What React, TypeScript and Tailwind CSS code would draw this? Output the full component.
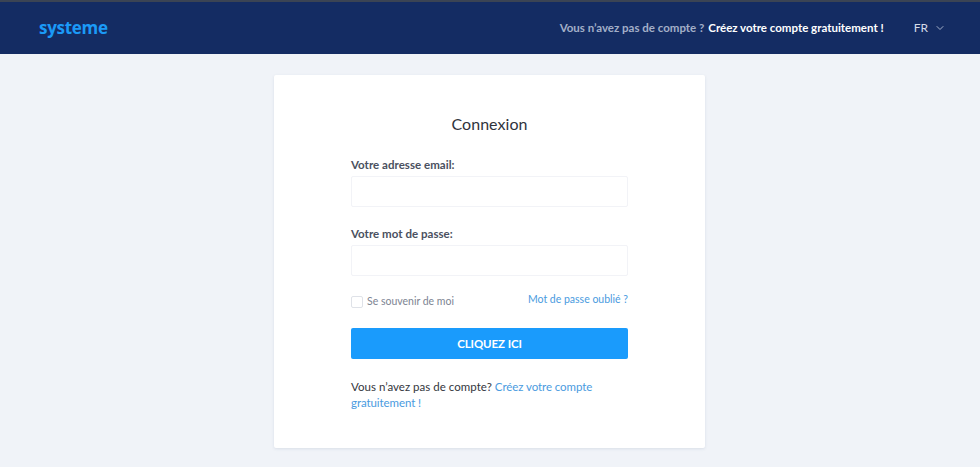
import React from "react";
import { ChevronDown } from "lucide-react";

const Header: React.FC = () => {
  return (
    <header className="h-[54px] border-t-2 border-[#3b4454] bg-[#142c63] flex items-center justify-between pl-[39px] pr-[34px]">
      <span className="text-[#1b9af7] text-[17px] font-bold leading-none font-['Open_Sans',sans-serif] tracking-[-0.3px] mt-[-2px]">
        systeme
      </span>
      <div className="flex items-center text-[11.5px] font-['Lato',sans-serif] mt-[-1px]">
        <span className="text-[#a3afc8] font-bold">Vous n’avez pas de compte ?</span>
        <span className="text-white font-bold ml-[4px]">Créez votre compte gratuitement !</span>
        <span className="text-[#d5dbe8] text-[12px] ml-[30px]">FR</span>
        <ChevronDown size={12} strokeWidth={2} className="text-[#a3afc8] ml-[6px]" />
      </div>
    </header>
  );
};

const Field: React.FC<{ label: string; type: string }> = ({ label, type }) => {
  return (
    <div>
      <label className="block text-[11.5px] leading-[16px] font-bold text-[#4a5060] tracking-[0.03px] mb-[3px]">
        {label}
      </label>
      <input
        type={type}
        className="block w-full h-[31px] bg-white border border-[#f2f3f7] rounded-[2px] outline-none"
      />
    </div>
  );
};

export default function App() {
  return (
    <div className="h-[467px] overflow-hidden bg-[#f0f3f8] font-['Lato',sans-serif]">
      <Header />
      <main className="flex justify-center pt-[21px] pr-px">
        <div className="w-[431px] h-[373px] bg-white rounded-[2px] shadow-[0_1px_3px_rgba(60,80,120,0.12)] px-[77px] pt-[38px]">
          <h1 className="text-center text-[16px] leading-[22px] text-[#2f333c] tracking-[0.05px]">
            Connexion
          </h1>
          <div className="mt-[22px] flex flex-col gap-[19px]">
            <Field label="Votre adresse email:" type="email" />
            <Field label="Votre mot de passe:" type="password" />
          </div>
          <div className="mt-[16px] flex justify-between items-start h-[20px]">
            <label className="flex items-center mt-[2px]">
              <span className="w-[12px] h-[12px] border border-[#dfe2e8] rounded-[2px] bg-white" />
              <span className="ml-[4px] text-[10.5px] text-[#7d8492]">Se souvenir de moi</span>
            </label>
            <a className="text-[10.5px] text-[#4a9be0]">Mot de passe oublié ?</a>
          </div>
          <button className="mt-[16px] w-full h-[31px] bg-[#1a9bfc] rounded-[2px] text-white text-[11.5px] font-bold tracking-[-0.1px]">
            CLIQUEZ ICI
          </button>
          <p className="mt-[20px] text-[11.5px] leading-[16px] text-[#33363d] tracking-[0.03px]">
            Vous n’avez pas de compte? <a className="text-[#4a9be0] tracking-[-0.08px]">Créez votre compte gratuitement !</a>
          </p>
        </div>
      </main>
    </div>
  );
}
